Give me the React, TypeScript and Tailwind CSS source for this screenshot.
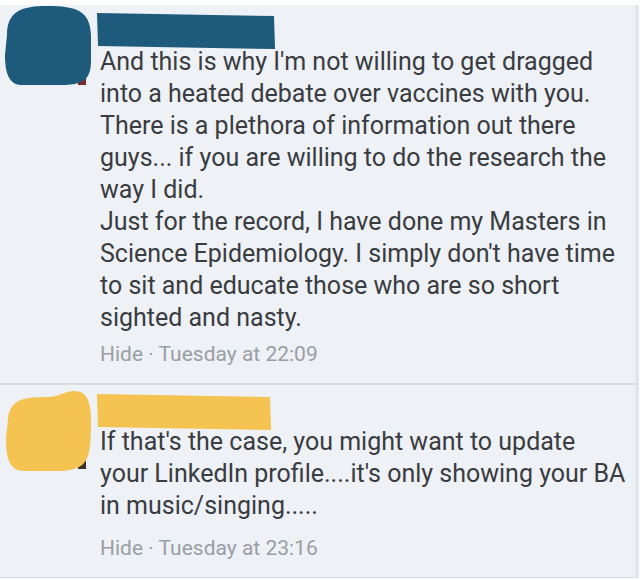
import React from "react"

const font = { fontFamily: "Roboto, 'Noto Sans', sans-serif" }

function Blob({ color, variant }: { color: string; variant: "a" | "b" }) {
    const d =
        variant === "a"
            ? "M5 30 C5 6 20 1 45 1 C75 1 88 6 89 30 L89 55 C89 72 84 80 60 80 L20 80 C8 80 3 70 3 50 Z"
            : "M6 30 C8 10 22 8 45 8 C58 8 62 2 72 2 C86 2 90 14 89 40 C88 70 86 80 60 82 L22 82 C8 82 4 70 4 50 Z"
    return (
        <svg width="92" height="84" viewBox="0 0 92 84" className="shrink-0">
            {variant === "a" && <rect x="76" y="70" width="8" height="10" fill="#7a2a2a" />}
            {variant === "b" && <rect x="76" y="72" width="8" height="8" fill="#3a3226" />}
            <path d={d} fill={color} />
        </svg>
    )
}

function NameBar({ color, w }: { color: string; w: number }) {
    return (
        <svg width={w} height="38" viewBox={`0 0 ${w} 38`} className="block">
            <polygon points={`0,1 ${w - 1},4 ${w},37 1,34`} fill={color} />
        </svg>
    )
}

function Comment({
    avatar,
    variant,
    barW,
    lines,
    time,
    top,
    textMt,
    hideMt,
    bottom,
    last,
}: {
    avatar: string
    variant: "a" | "b"
    barW: number
    lines: string[]
    time: string
    top: string
    textMt: string
    hideMt: string
    bottom: string
    last?: boolean
}) {
    return (
        <div className={`flex ${last ? "border-b border-[#d9dde2]" : "border-b-2 border-[#d9dde2]"}`}>
            <div className="w-[97px] pl-[2px]">
                <Blob color={avatar} variant={variant} />
            </div>
            <div className={`flex-1 ${top}`}>
                <NameBar color={avatar} w={barW} />
                <div className={`${textMt} text-[25px] leading-[32px] text-[#393c41] pl-[3px]`}>
                    {lines.map((l, i) => (
                        <div key={i} className="whitespace-nowrap">{l}</div>
                    ))}
                </div>
                <div className={`pl-[3px] ${hideMt} ${bottom} text-[21px] leading-[32px] text-[#9a9ea4]`}>
                    Hide · {time}
                </div>
            </div>
        </div>
    )
}

export default function App() {
    return (
        <div className="w-[640px] h-[580px] bg-white pt-[5px]" style={font}>
            <div className="bg-[#eef1f5] border-r-4 border-[#e2e5e9] mr-[1px]">
                <Comment
                    avatar="#1d5a7c"
                    variant="a"
                    barW={178}
                    top="pt-[7px]"
                    textMt="-mt-[4px]"
                    hideMt="mt-[4px]"
                    bottom="mb-[13px]"
                    lines={[
                        "And this is why I'm not willing to get dragged",
                        "into a heated debate over vaccines with you.",
                        "There is a plethora of information out there",
                        "guys... if you are willing to do the research the",
                        "way I did.",
                        "Just for the record, I have done my Masters in",
                        "Science Epidemiology. I simply don't have time",
                        "to sit and educate those who are so short",
                        "sighted and nasty.",
                    ]}
                    time="Tuesday at 22:09"
                />
                <div className="pt-[4px]">
                    <Comment
                        avatar="#f4c352"
                        variant="b"
                        barW={174}
                        top="pt-[4px]"
                        textMt="-mt-[5px]"
                        hideMt="mt-[10px]"
                        bottom="mb-[13px]"
                        lines={[
                            "If that's the case, you might want to update",
                            "your LinkedIn profile....it's only showing your BA",
                            "in music/singing.....",
                        ]}
                        time="Tuesday at 23:16"
                        last
                    />
                </div>
            </div>
        </div>
    )
}
